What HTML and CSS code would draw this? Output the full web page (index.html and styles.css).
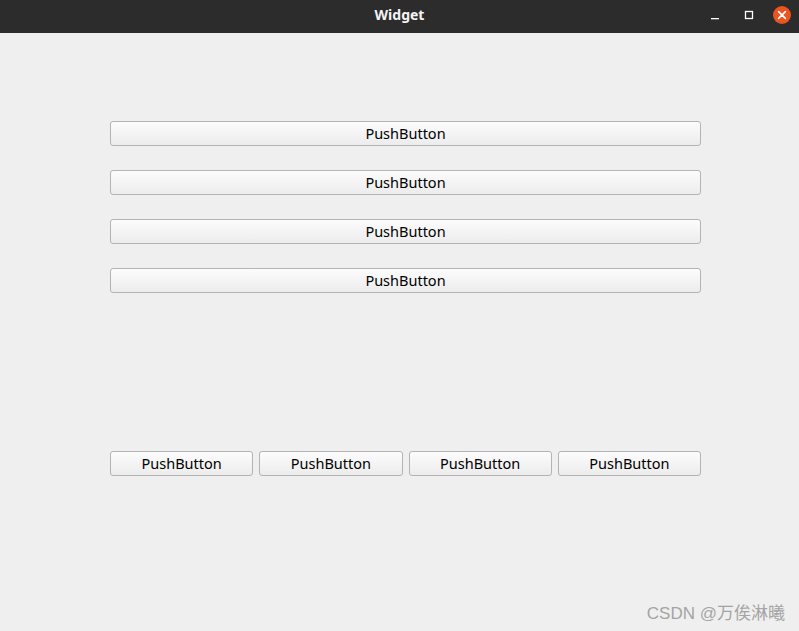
FILE: index.html
```html
<!DOCTYPE html>
<html>
<head>
<meta charset="utf-8">
<link rel="stylesheet" href="styles.css">
</head>
<body>
<div class="window">
  <div class="titlebar">
    <span class="title">Widget</span>
    <div class="controls">
      <span class="ctl min"><svg width="10" height="10" viewBox="0 0 10 10"><rect x="1" y="7" width="8" height="1.3" fill="#fff"/></svg></span>
      <span class="ctl max"><svg width="10" height="10" viewBox="0 0 10 10"><rect x="1.5" y="1.5" width="7" height="7" fill="none" stroke="#fff" stroke-width="1.3"/></svg></span>
      <span class="ctl close"><svg width="18" height="18" viewBox="0 0 18 18"><circle cx="9" cy="9" r="9" fill="#e95420"/><path d="M5.6 5.6 L12.4 12.4 M12.4 5.6 L5.6 12.4" stroke="#fff" stroke-width="1.6" stroke-linecap="round"/></svg></span>
    </div>
  </div>
  <div class="content">
    <div class="column">
      <button class="btn">PushButton</button>
      <button class="btn">PushButton</button>
      <button class="btn">PushButton</button>
      <button class="btn">PushButton</button>
    </div>
    <div class="row">
      <button class="btn">PushButton</button>
      <button class="btn">PushButton</button>
      <button class="btn">PushButton</button>
      <button class="btn">PushButton</button>
    </div>
  </div>
  <div class="watermark">CSDN @万俟淋曦</div>
</div>
</body>
</html>
```
FILE: styles.css
```css
html, body {
  margin: 0;
  padding: 0;
  background: #efefef;
}
.window {
  position: relative;
  width: 799px;
  height: 631px;
  overflow: hidden;
  background: #efefef;
  font-family: "Noto Sans", "DejaVu Sans", sans-serif;
}
.titlebar {
  position: relative;
  height: 33px;
  background: #2c2c2c;
  display: flex;
  align-items: center;
  justify-content: center;
}
.title {
  color: #f4f4f4;
  font-weight: bold;
  font-size: 14px;
  margin-top: -4px;
}
.controls {
  position: absolute;
  right: 8px;
  top: 5px;
  display: flex;
  align-items: center;
  gap: 0;
}
.ctl {
  display: flex;
  align-items: center;
  justify-content: center;
}
.min { width: 34px; height: 18px; margin-top: 2px; }
.max { width: 34px; height: 18px; margin-top: -1px; }
.close { width: 18px; height: 18px; margin-left: 7px; }
.content {
  padding: 88px 0 0 110px;
  width: 591px;
}
.column {
  display: flex;
  flex-direction: column;
  gap: 24px;
}
.row {
  margin-top: 158px;
  display: flex;
  gap: 6px;
}
.row .btn {
  flex: 1;
}
.btn {
  height: 25px;
  box-sizing: border-box;
  border: 1px solid #b3b3b3;
  border-radius: 3px;
  background: linear-gradient(#fcfcfc, #ececec);
  font-family: "Noto Sans", "DejaVu Sans", sans-serif;
  font-size: 14.5px;
  color: #000;
  padding: 0;
  margin: 0;
  line-height: 23px;
  text-align: center;
}
.watermark {
  position: absolute;
  right: 14px;
  bottom: 7px;
  font-family: "Liberation Sans", "Noto Sans CJK SC", sans-serif;
  font-size: 17px;
  color: #a4a4a4;
}
```
